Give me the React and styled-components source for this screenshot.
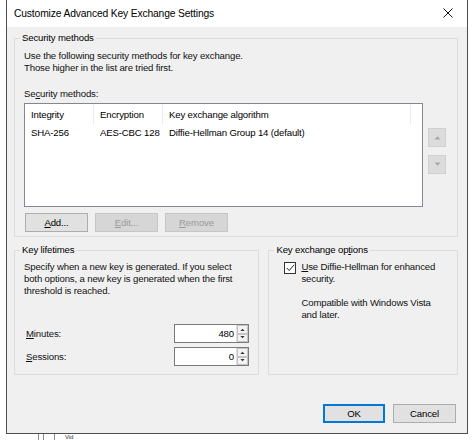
import React from "react";
import styled, { createGlobalStyle } from "styled-components";

const GlobalStyle = createGlobalStyle`
  html, body {
    margin: 0;
    padding: 0;
    background: #ffffff;
  }
  body {
    font-family: "Liberation Sans", Arial, sans-serif;
    font-size: 9.6px;
    letter-spacing: -0.15px;
    color: #111;
  }
`;

const Screen = styled.div`
  width: 474px;
  height: 440px;
  overflow: hidden;
  display: flex;
  flex-direction: column;
`;

const Window = styled.div`
  margin-left: 6px;
  width: 462px;
  height: 434px;
  box-sizing: border-box;
  border: 1px solid #4d4d4d;
  border-top: none;
  background: #f0f0f0;
  display: flex;
  flex-direction: column;
  flex-shrink: 0;
`;

const TitleBar = styled.div`
  height: 27px;
  flex-shrink: 0;
  background: #ffffff;
  display: flex;
  align-items: center;
  justify-content: space-between;
  padding: 0 7px 0 7px;
  font-size: 10.3px;
  color: #000;
`;

const CloseButton = styled.div`
  width: 24px;
  height: 27px;
  display: flex;
  align-items: center;
  justify-content: center;
  margin-top: -1px;
`;

const Body = styled.div`
  flex: 1;
  display: flex;
  flex-direction: column;
  padding: 5px 9px 10px 7px;
`;

const Group = styled.fieldset`
  margin: 0;
  box-sizing: border-box;
  border: 1px solid #dcdcdc;
  padding: ${({ $pad }) => $pad};
  height: ${({ $h }) => $h}px;
  width: ${({ $w }) => ($w ? `${$w}px` : "auto")};
  min-width: 0;
  display: flex;
  flex-direction: column;
`;

const Legend = styled.legend`
  padding: 0 2px;
  margin-left: ${({ $lm }) => $lm}px;
  line-height: 12px;
  color: #000;
`;

const Para = styled.p`
  margin: ${({ $m }) => $m || "0"};
  line-height: 12px;
`;

const FieldLabel = styled.div`
  line-height: 12px;
  margin-top: 14px;
`;

const ListRow = styled.div`
  display: flex;
  margin-top: 3px;
  gap: 5px;
`;

const ListBox = styled.div`
  width: 399px;
  height: 104px;
  box-sizing: border-box;
  border: 1px solid #828790;
  background: #ffffff;
`;

const ListLine = styled.div`
  display: grid;
  grid-template-columns: 69px 69px 248px;
  height: ${({ $h }) => $h}px;
  align-items: center;
`;

const HeadCell = styled.div`
  height: 100%;
  display: flex;
  align-items: center;
  padding-left: 6px;
  border-right: 1px solid #ececec;
  color: #000;
`;

const Cell = styled.div`
  padding-left: 6px;
  color: #000;
`;

const MoveColumn = styled.div`
  display: flex;
  flex-direction: column;
  gap: 8px;
  margin-top: 25px;
`;

const MoveButton = styled.div`
  width: 18px;
  height: 19px;
  box-sizing: border-box;
  border: 1px solid #d0d0d0;
  background: #dcdcdc;
  display: flex;
  align-items: center;
  justify-content: center;
`;

const ButtonRow = styled.div`
  display: flex;
  gap: 7px;
  margin-top: 6px;
  margin-left: 1px;
`;

const Button = styled.div`
  width: ${({ $w }) => $w}px;
  height: 19px;
  box-sizing: border-box;
  border: 1px solid ${({ $disabled, $default }) =>
    $default ? "#0078d7" : $disabled ? "#c6c6c6" : "#adadad"};
  box-shadow: ${({ $default }) => ($default ? "inset 0 0 0 1px #0078d7" : "none")};
  background: ${({ $disabled }) => ($disabled ? "#d6d6d6" : "#e1e1e1")};
  color: ${({ $disabled }) => ($disabled ? "#9a9a9a" : "#000")};
  display: flex;
  align-items: center;
  justify-content: center;
  line-height: 12px;
`;

const LowerRow = styled.div`
  display: flex;
  gap: 9px;
  margin-top: 7px;
`;

const Spacer = styled.div`
  flex: 1;
`;

const NumberRows = styled.div`
  display: grid;
  grid-template-columns: 148px 75px;
  row-gap: 4px;
  align-items: center;
  padding-left: 2px;
`;

const NumberBox = styled.div`
  height: 19px;
  box-sizing: border-box;
  border: 1px solid #7a7a7a;
  background: #ffffff;
  display: flex;
  align-items: stretch;
`;

const NumberValue = styled.div`
  flex: 1;
  display: flex;
  align-items: center;
  justify-content: flex-end;
  padding-right: 2px;
  color: #000;
`;

const Spin = styled.div`
  width: 11px;
  display: flex;
  flex-direction: column;
  border-left: 1px solid #e0e0e0;
`;

const SpinHalf = styled.div`
  flex: 1;
  background: #f3f3f3;
  border: 1px solid #c4c4c4;
  display: flex;
  align-items: center;
  justify-content: center;
`;

const CheckRow = styled.div`
  display: flex;
  gap: 5px;
  align-items: flex-start;
`;

const CheckBox = styled.div`
  width: 12px;
  height: 12px;
  margin-top: 1px;
  box-sizing: border-box;
  border: 1px solid #333;
  background: #fff;
  display: flex;
  align-items: center;
  justify-content: center;
  flex-shrink: 0;
`;

const Footer = styled.div`
  display: flex;
  justify-content: flex-end;
  gap: 8px;
  padding-right: 2px;
`;

const Behind = styled.div`
  flex: 1;
  display: flex;
  align-items: flex-start;
  background: #ffffff;
`;

const BehindLine = styled.div`
  width: 1px;
  height: 6px;
  background: #8a8a8a;
  margin-left: ${({ $ml }) => $ml}px;
`;

const BehindText = styled.div`
  margin-left: 10px;
  font-size: 6px;
  line-height: 6px;
  color: #333;
`;

const Arrow = ({ up, color = "#a8a8a8", size = 5 }) => (
  <svg width={size + 2} height={size} viewBox="0 0 7 4">
    <path d={up ? "M0.5 4 L3.5 0.8 L6.5 4 Z" : "M0.5 0 L3.5 3.2 L6.5 0 Z"} fill={color} />
  </svg>
);

const Spinner = () => (
  <Spin>
    <SpinHalf>
      <Arrow up color="#333" size={3} />
    </SpinHalf>
    <SpinHalf>
      <Arrow color="#333" size={3} />
    </SpinHalf>
  </Spin>
);

export default function App() {
  return (
    <>
      <GlobalStyle />
      <Screen>
        <Window>
          <TitleBar>
            <span>Customize Advanced Key Exchange Settings</span>
            <CloseButton>
              <svg width="10" height="10" viewBox="0 0 10 10">
                <path d="M0.5 0.5 L9.5 9.5 M9.5 0.5 L0.5 9.5" stroke="#111" strokeWidth="1" />
              </svg>
            </CloseButton>
          </TitleBar>
          <Body>
            <Group $h={205} $pad="6px 9px 5px 9px">
              <Legend $lm={-4}>Security methods</Legend>
              <Para>
                Use the following security methods for key exchange.
                <br />
                Those higher in the list are tried first.
              </Para>
              <FieldLabel>
                Se<u>c</u>urity methods:
              </FieldLabel>
              <ListRow>
                <ListBox>
                  <ListLine $h={20}>
                    <HeadCell>Integrity</HeadCell>
                    <HeadCell>Encryption</HeadCell>
                    <HeadCell>Key exchange algorithm</HeadCell>
                  </ListLine>
                  <ListLine $h={17}>
                    <Cell>SHA-256</Cell>
                    <Cell>AES-CBC 128</Cell>
                    <Cell>Diffie-Hellman Group 14 (default)</Cell>
                  </ListLine>
                </ListBox>
                <MoveColumn>
                  <MoveButton>
                    <Arrow up />
                  </MoveButton>
                  <MoveButton>
                    <Arrow />
                  </MoveButton>
                </MoveColumn>
              </ListRow>
              <ButtonRow>
                <Button $w={63}>
                  <u>A</u>dd...
                </Button>
                <Button $w={63} $disabled>
                  <u>E</u>dit...
                </Button>
                <Button $w={63} $disabled>
                  <u>R</u>emove
                </Button>
              </ButtonRow>
            </Group>

            <LowerRow>
              <Group $h={131} $w={246} $pad="5px 9px 8px 9px">
                <Legend $lm={-4}>Key lifetimes</Legend>
                <Para>
                  Specify when a new key is generated. If you select
                  <br />
                  both options, a new key is generated when the first
                  <br />
                  threshold is reached.
                </Para>
                <Spacer />
                <NumberRows>
                  <span>
                    <u>M</u>inutes:
                  </span>
                  <NumberBox>
                    <NumberValue>480</NumberValue>
                    <Spinner />
                  </NumberBox>
                  <span>
                    <u>S</u>essions:
                  </span>
                  <NumberBox>
                    <NumberValue>0</NumberValue>
                    <Spinner />
                  </NumberBox>
                </NumberRows>
              </Group>

              <Group $h={131} $w={190} $pad="5px 9px 8px 15px">
                <Legend $lm={-10}>
                  Key exchange op<u>t</u>ions
                </Legend>
                <CheckRow>
                  <CheckBox>
                    <svg width="9" height="8" viewBox="0 0 9 8">
                      <path d="M0.8 4 L3.2 6.5 L8.2 0.8" stroke="#222" strokeWidth="1" fill="none" />
                    </svg>
                  </CheckBox>
                  <div>
                    <Para>
                      <u>U</u>se Diffie-Hellman for enhanced
                      <br />
                      security.
                    </Para>
                    <Para $m="12px 0 0 0">
                      Compatible with Windows Vista
                      <br />
                      and later.
                    </Para>
                  </div>
                </CheckRow>
              </Group>
            </LowerRow>

            <Spacer />

            <Footer>
              <Button $w={62} $default>
                OK
              </Button>
              <Button $w={63}>Cancel</Button>
            </Footer>
          </Body>
        </Window>
        <Behind>
          <BehindLine $ml={38} />
          <BehindLine $ml={4} />
          <BehindLine $ml={10} />
          <BehindText>Vid</BehindText>
        </Behind>
      </Screen>
    </>
  );
}
